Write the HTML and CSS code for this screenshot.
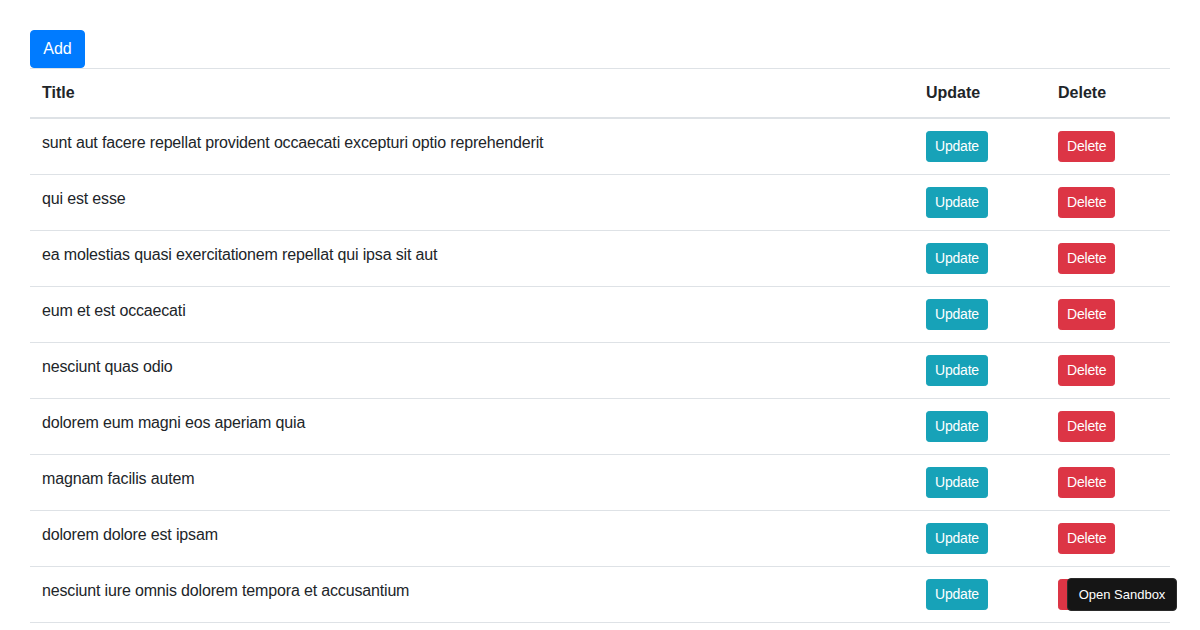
FILE: index.html
```html
<!DOCTYPE html>
<html lang="en">
<head>
<meta charset="utf-8">
<title>Posts</title>
<link rel="stylesheet" href="styles.css">
</head>
<body>
<div class="container">
  <button class="btn btn-primary">Add</button>
  <table class="table">
    <colgroup>
      <col class="col-title">
      <col class="col-update">
      <col class="col-delete">
    </colgroup>
    <thead>
      <tr><th>Title</th><th>Update</th><th>Delete</th></tr>
    </thead>
    <tbody>
      <tr><td>sunt aut facere repellat provident occaecati excepturi optio reprehenderit</td><td><button class="btn btn-sm btn-info">Update</button></td><td><button class="btn btn-sm btn-danger">Delete</button></td></tr>
      <tr><td>qui est esse</td><td><button class="btn btn-sm btn-info">Update</button></td><td><button class="btn btn-sm btn-danger">Delete</button></td></tr>
      <tr><td>ea molestias quasi exercitationem repellat qui ipsa sit aut</td><td><button class="btn btn-sm btn-info">Update</button></td><td><button class="btn btn-sm btn-danger">Delete</button></td></tr>
      <tr><td>eum et est occaecati</td><td><button class="btn btn-sm btn-info">Update</button></td><td><button class="btn btn-sm btn-danger">Delete</button></td></tr>
      <tr><td>nesciunt quas odio</td><td><button class="btn btn-sm btn-info">Update</button></td><td><button class="btn btn-sm btn-danger">Delete</button></td></tr>
      <tr><td>dolorem eum magni eos aperiam quia</td><td><button class="btn btn-sm btn-info">Update</button></td><td><button class="btn btn-sm btn-danger">Delete</button></td></tr>
      <tr><td>magnam facilis autem</td><td><button class="btn btn-sm btn-info">Update</button></td><td><button class="btn btn-sm btn-danger">Delete</button></td></tr>
      <tr><td>dolorem dolore est ipsam</td><td><button class="btn btn-sm btn-info">Update</button></td><td><button class="btn btn-sm btn-danger">Delete</button></td></tr>
      <tr><td>nesciunt iure omnis dolorem tempora et accusantium</td><td><button class="btn btn-sm btn-info">Update</button></td><td><button class="btn btn-sm btn-danger">Delete</button></td></tr>
    </tbody>
  </table>
</div>
<a class="sandbox-tip">Open Sandbox</a>
</body>
</html>
```
FILE: styles.css
```css
html, body {
  margin: 0;
  padding: 0;
  overflow: hidden;
}
body {
  font-family: "Liberation Sans", Arial, sans-serif;
  font-size: 16px;
  line-height: 1.5;
  color: #212529;
  background: #fff;
}
.container {
  width: 1140px;
  margin: 0 auto;
  padding-top: 30px;
}
.btn {
  display: inline-block;
  font-family: inherit;
  font-weight: 400;
  letter-spacing: 0;
  text-align: center;
  vertical-align: middle;
  border: 1px solid transparent;
  padding: 6px 12px;
  font-size: 16px;
  line-height: 1.5;
  border-radius: 4px;
  color: #fff;
  margin: 0;
  cursor: pointer;
}
.container > .btn {
  display: block;
  width: 55px;
  padding-left: 0;
  padding-right: 0;
}
.btn-primary {
  background: #007bff;
  border-color: #007bff;
}
.btn-sm {
  padding: 4px 8px;
  font-size: 14px;
  line-height: 1.5;
  border-radius: 3.2px;
  letter-spacing: -0.2px;
}
.btn-info {
  background: #17a2b8;
  border-color: #17a2b8;
}
.btn-danger {
  background: #dc3545;
  border-color: #dc3545;
}
.table {
  width: 100%;
  border-collapse: collapse;
  table-layout: fixed;
  color: #212529;
}
.col-title { width: 884px; }
.col-update { width: 132px; }
.col-delete { width: 124px; }
.table th, .table td {
  padding: 12px;
  vertical-align: top;
  border-top: 1px solid #dee2e6;
  text-align: left;
}
.table td {
  letter-spacing: -0.16px;
}
.table th {
  font-weight: 700;
}
.table thead th {
  vertical-align: bottom;
  border-bottom: 2px solid #dee2e6;
}
.table tbody tr:first-child td {
  border-top: 0;
}
.table tbody tr:last-child td {
  border-bottom: 1px solid #dee2e6;
}
.sandbox-tip {
  position: fixed;
  right: 23px;
  bottom: 19px;
  width: 110px;
  height: 33px;
  box-sizing: border-box;
  display: flex;
  align-items: center;
  justify-content: center;
  background: #151515;
  color: #fff;
  font-size: 13px;
  border-radius: 4px;
  border: 1px solid #2a2a2a;
}
```
